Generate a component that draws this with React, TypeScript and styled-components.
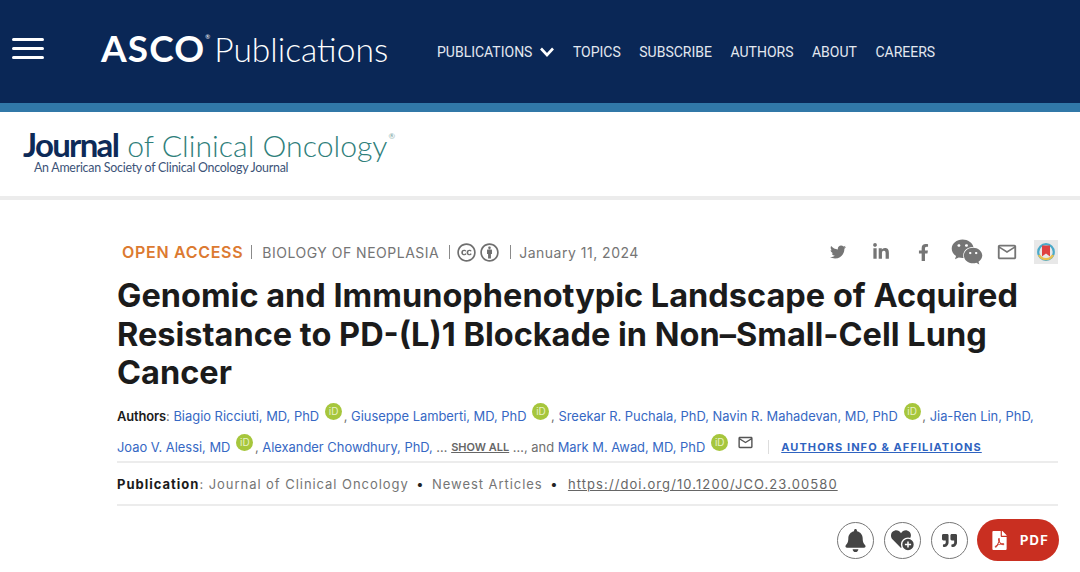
import React from "react";
import styled, { createGlobalStyle } from "styled-components";
import { FaTwitter, FaLinkedinIn, FaFacebookF, FaWeixin, FaBell, FaQuoteRight, FaFilePdf, FaCreativeCommons, FaCreativeCommonsBy } from "react-icons/fa";
import { MdMailOutline } from "react-icons/md";

const Global = createGlobalStyle`
  html, body { margin: 0; padding: 0; background: #fff; }
  body { width: 1080px; height: 572px; overflow: hidden; font-family: Inter, "Liberation Sans", sans-serif; }
  * { box-sizing: border-box; }
`;

const Page = styled.div`
  width: 1080px;
  height: 572px;
  display: flex;
  flex-direction: column;
  overflow: hidden;
`;
const TopBar = styled.header`
  height: 112px;
  background: #0a2756;
  border-bottom: 9px solid #3178a8;
  display: flex;
  align-items: flex-start;
  padding: 38px 0 0 12px;
  flex: none;
`;
const Burger = styled.div`
  width: 32px;
  height: 21px;
  display: flex;
  flex-direction: column;
  justify-content: space-between;
  span { display: block; height: 3.4px; border-radius: 2px; background: #fff; }
`;
const Logo = styled.div`
  margin-left: 57px;
  margin-top: -10px;
  display: flex;
  align-items: baseline;
  color: #fff;
  font-family: Lato, sans-serif;
  white-space: nowrap;
  line-height: 40px;
  width: 299px;
  flex: none;
`;
const LogoMark = styled.span`
  font-size: 37px;
  font-weight: 700;
  letter-spacing: 1.1px;
`;
const LogoReg = styled.sup`
  font-size: 6px;
  line-height: 0;
  align-self: flex-start;
  margin: 9px 1px 0 0;
`;
const LogoWord = styled.span`
  font-size: 33.6px;
  font-weight: 300;
  margin-left: 3px;
`;
const Nav = styled.nav`
  display: flex;
  align-items: center;
  gap: 18.5px;
  margin-left: 37px;
  margin-top: 6px;
`;
const NavItem = styled.a`
  font-family: Roboto, sans-serif;
  font-size: 14px;
  line-height: 16px;
  color: #e3e8f0;
  display: flex;
  align-items: center;
  gap: 8px;
  white-space: nowrap;
`;
const JournalBar = styled.div`
  height: 88px;
  flex: none;
  background: #fff;
  border-bottom: 4px solid #ececec;
  padding: 15px 0 0 23px;
  font-family: Lato, sans-serif;
`;
const JournalTitle = styled.div`
  display: flex;
  align-items: baseline;
  white-space: nowrap;
  line-height: 34px;
  height: 34px;
`;
const JournalStrong = styled.span`
  color: #0d2a58;
  font-size: 33px;
  font-weight: 700;
  letter-spacing: -1.7px;
`;
const JournalLight = styled.span`
  color: #2f807b;
  font-size: 30.2px;
  font-weight: 300;
  margin-left: 9px;
`;
const JournalReg = styled.span`
  color: #7fa9a8;
  font-size: 8px;
  align-self: flex-start;
  line-height: 18px;
  margin-left: 1px;
`;
const JournalSub = styled.div`
  color: #3c5378;
  font-size: 12.4px;
  line-height: 14px;
  margin-left: 11px;
  letter-spacing: -0.25px;
`;
const Article = styled.main`
  padding: 40px 22px 0 117px;
  flex: 1;
  display: flex;
  flex-direction: column;
`;
const MetaRow = styled.div`
  display: flex;
  align-items: center;
  justify-content: space-between;
  height: 24px;
`;
const MetaLeft = styled.div`
  display: flex;
  align-items: center;
  margin-left: 5px;
  color: #757575;
  font-size: 14px;
  letter-spacing: 0.5px;
  white-space: nowrap;
`;
const Access = styled.span`
  color: #dc7a31;
  font-weight: 600;
  font-size: 16px;
  letter-spacing: 0.7px;
`;
const Pipe = styled.span<{ $l: number; $r: number }>`
  width: 1px;
  height: 14px;
  background: #8a8a8a;
  margin: 0 ${(p) => p.$r}px 0 ${(p) => p.$l}px;
`;
const Licence = styled.span`
  display: flex;
  gap: 4px;
  font-size: 19px;
  color: #6f6f6f;
`;
const Social = styled.div`
  display: flex;
  align-items: center;
  color: #757575;
`;
const SocialSlot = styled.span<{ $w: number; $end?: boolean }>`
  width: ${(p) => p.$w}px;
  display: flex;
  justify-content: ${(p) => (p.$end ? "flex-end" : "center")};
  align-items: center;
`;
const Title = styled.h1`
  margin: 13px 0 0;
  width: 930px;
  font-size: 32.5px;
  line-height: 38.5px;
  font-weight: 700;
  color: #1b1b1b;
`;
const Authors = styled.div`
  margin-top: 8px;
  font-size: 12.9px;
  color: #6f6f6f;
  white-space: nowrap;
  border-bottom: 2px solid #ececec;
  height: 62.5px;
`;
const AuthorLine = styled.div`
  height: 31px;
  display: flex;
  align-items: center;
  white-space: pre;
`;
const Label = styled.b`
  color: #1b1b1b;
  font-weight: 600;
  letter-spacing: -0.1px;
`;
const Author = styled.a`
  color: #3668c4;
`;
const Orcid = styled.span`
  width: 17px;
  height: 17px;
  border-radius: 50%;
  background: #a6c63c;
  color: #e9f2c8;
  font-size: 10px;
  line-height: 17px;
  text-align: center;
  margin: -10px -2px 0 6px;
  flex: none;
`;
const ShowAll = styled.a`
  color: #666;
  font-size: 11px;
  font-weight: 600;
  text-decoration: underline;
`;
const MailIcon = styled(MdMailOutline)`
  color: #555;
  margin: -10px 0 0 11px;
`;
const InfoLink = styled.a`
  color: #2f63c0;
  font-size: 11px;
  font-weight: 700;
  letter-spacing: 1.08px;
  text-decoration: underline;
`;
const Divider = styled.span`
  width: 1px;
  height: 14px;
  background: #ddd;
  margin: 0 12px 0 14px;
`;
const PubRow = styled.div`
  height: 43px;
  display: flex;
  align-items: center;
  font-size: 13px;
  letter-spacing: 0.95px;
  color: #757575;
  border-bottom: 2px solid #ececec;
  white-space: pre;
`;
const PubLabel = styled.b`
  color: #1b1b1b;
  font-weight: 700;
  letter-spacing: 1px;
`;
const Dot = styled.span`
  color: #222;
  margin: 0 7.5px;
`;
const Doi = styled.a`
  color: #666;
  letter-spacing: 1.09px;
  margin-left: 2px;
  text-decoration: underline;
`;
const Actions = styled.div`
  display: flex;
  justify-content: flex-end;
  align-items: center;
  gap: 10px;
  margin: 13px -1px 0 0;
`;
const RoundBtn = styled.button`
  width: 37px;
  height: 37px;
  border-radius: 50%;
  border: 1.5px solid #777;
  background: #fff;
  color: #444;
  padding: 0;
  display: flex;
  align-items: center;
  justify-content: center;
`;
const PdfBtn = styled.button`
  width: 82px;
  height: 42px;
  margin-left: -1px;
  border: none;
  border-radius: 21px;
  background: #c92f21;
  color: #fff;
  display: flex;
  align-items: center;
  gap: 11px;
  padding: 0 0 0 13px;
  font-family: Inter, sans-serif;
  font-size: 13px;
  font-weight: 700;
  letter-spacing: 1.2px;
`;

const Chevron = () => (
  <svg width="14" height="10" viewBox="0 0 14 10" fill="none" stroke="#fff" strokeWidth="2.6">
    <path d="M1 1.5 7 8l6-6.5" />
  </svg>
);
const HeartPlus = () => (
  <svg width="26" height="24" viewBox="0 0 26 24">
    <path d="M11 20 2.4 11.2C-.2 8.4.8 3.2 5 2.4c2.6-.4 4.8.8 6 2.8 1.2-2 3.4-3.2 6-2.8 4 .8 5 5.4 2.8 8.4L11 20Z" fill="#444" />
    <circle cx="18" cy="16.5" r="6.4" fill="#444" stroke="#fff" strokeWidth="1.4" />
    <path d="M18 13.4v6.2M14.9 16.5h6.2" stroke="#fff" strokeWidth="1.5" />
  </svg>
);
const BookmarkBadge = () => (
  <svg width="24" height="24" viewBox="0 0 24 24">
    <rect width="24" height="24" fill="#e8e8e8" />
    <circle cx="12" cy="12" r="7.8" fill="none" stroke="#4aa9c9" strokeWidth="2.2" />
    <path d="M5 15a8 8 0 0 0 14 0" fill="none" stroke="#eac04e" strokeWidth="2.4" />
    <path d="M8 5.5h8v11l-4-3-4 3Z" fill="#df4040" />
  </svg>
);

export default function App() {
  return (
    <Page>
      <Global />
      <TopBar>
        <Burger><span /><span /><span /></Burger>
        <Logo>
          <LogoMark>ASCO</LogoMark>
          <LogoReg>®</LogoReg>
          <LogoWord>Publications</LogoWord>
        </Logo>
        <Nav>
          <NavItem>PUBLICATIONS <Chevron /></NavItem>
          <NavItem>TOPICS</NavItem>
          <NavItem>SUBSCRIBE</NavItem>
          <NavItem>AUTHORS</NavItem>
          <NavItem>ABOUT</NavItem>
          <NavItem>CAREERS</NavItem>
        </Nav>
      </TopBar>
      <JournalBar>
        <JournalTitle>
          <JournalStrong>Journal</JournalStrong>
          <JournalLight>of Clinical Oncology</JournalLight>
          <JournalReg>®</JournalReg>
        </JournalTitle>
        <JournalSub>An American Society of Clinical Oncology Journal</JournalSub>
      </JournalBar>
      <Article>
        <MetaRow>
          <MetaLeft>
            <Access>OPEN ACCESS</Access>
            <Pipe $l={8} $r={10} />
            BIOLOGY OF NEOPLASIA
            <Pipe $l={10} $r={7} />
            <Licence><FaCreativeCommons /><FaCreativeCommonsBy /></Licence>
            <Pipe $l={11} $r={8} />
            January 11, 2024
          </MetaLeft>
          <Social>
            <SocialSlot $w={50}><FaTwitter size={16} /></SocialSlot>
            <SocialSlot $w={36}><FaLinkedinIn size={18} /></SocialSlot>
            <SocialSlot $w={48}><FaFacebookF size={17} /></SocialSlot>
            <SocialSlot $w={40}><FaWeixin size={32} /></SocialSlot>
            <SocialSlot $w={40}><MdMailOutline size={22} /></SocialSlot>
            <SocialSlot $w={31} $end><BookmarkBadge /></SocialSlot>
          </Social>
        </MetaRow>
        <Title>Genomic and Immunophenotypic Landscape of Acquired Resistance to PD-(L)1 Blockade in Non–Small-Cell Lung Cancer</Title>
        <Authors>
          <AuthorLine>
            <Label>Authors</Label>: <Author>Biagio Ricciuti, MD, PhD</Author><Orcid>iD</Orcid> , <Author>Giuseppe Lamberti, MD, PhD</Author><Orcid>iD</Orcid> , <Author>Sreekar R. Puchala, PhD, Navin R. Mahadevan, MD, PhD</Author><Orcid>iD</Orcid> , <Author>Jia-Ren Lin, PhD,</Author>
          </AuthorLine>
          <AuthorLine>
            <Author>Joao V. Alessi, MD</Author><Orcid>iD</Orcid> , <Author>Alexander Chowdhury, PhD,</Author> … <ShowAll>SHOW ALL</ShowAll> …, and <Author>Mark M. Awad, MD, PhD</Author><Orcid>iD</Orcid>
            <MailIcon size={17} />
            <Divider />
            <InfoLink>AUTHORS INFO &amp; AFFILIATIONS</InfoLink>
          </AuthorLine>
        </Authors>
        <PubRow>
          <PubLabel>Publication</PubLabel>: Journal of Clinical Oncology<Dot>•</Dot>Newest Articles<Dot>•</Dot><Doi>https://doi.org/10.1200/JCO.23.00580</Doi>
        </PubRow>
        <Actions>
          <RoundBtn><FaBell size={23} /></RoundBtn>
          <RoundBtn><HeartPlus /></RoundBtn>
          <RoundBtn><FaQuoteRight size={15} /></RoundBtn>
          <PdfBtn><FaFilePdf size={19} />PDF</PdfBtn>
        </Actions>
      </Article>
    </Page>
  );
}
